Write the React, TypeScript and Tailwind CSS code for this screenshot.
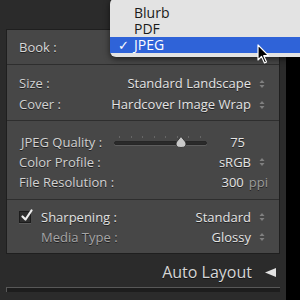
import React from "react";

const shadow = "[text-shadow:0_1px_0_rgba(0,0,0,0.55)]";

function Stepper() {
  return (
    <svg width="6" height="10" viewBox="0 0 6 10" className="ml-[8px] flex-none">
      <path d="M0.5 4 L3 1 L5.5 4 Z" fill="#808080" />
      <path d="M0.5 6 L3 9 L5.5 6 Z" fill="#808080" />
    </svg>
  );
}

function Row({
  label,
  value,
  labelClass = "text-[#d2d2d2]",
}: {
  label: React.ReactNode;
  value: string;
  labelClass?: string;
}) {
  return (
    <div className="flex items-center justify-between h-[21px]">
      <span className={`${labelClass} ${shadow}`}>{label}</span>
      <div className="flex items-center">
        <span className={`text-[#e4e4e4] ${shadow}`}>{value}</span>
        <Stepper />
      </div>
    </div>
  );
}

export default function App() {
  const ticks = [0, 1, 2, 3, 4, 5, 6, 7];
  return (
    <div className="relative w-[300px] h-[300px] bg-[#2b2b2b] flex overflow-hidden font-['Open_Sans',sans-serif] text-[13px] leading-none">
      <div className="w-[286px] flex flex-col pl-[6px] pr-[6px] pt-[29px]">
        <div className="border border-[#1f1f1f] bg-[#474747]">
          {/* Book */}
          <div className="h-[34px] flex items-center pl-[12px] pr-[14px]">
            <span className={`text-[#d8d8d8] ${shadow}`}>Book :</span>
          </div>
          {/* Size / Cover */}
          <div className="border-t border-[#2e2e2e] pl-[12px] pr-[14px] pt-[8px] pb-[5px]">
            <Row label="Size :" value="Standard Landscape" />
            <Row label="Cover :" value="Hardcover Image Wrap" />
          </div>
          {/* JPEG */}
          <div className="border-t border-[#2e2e2e] pl-[12px] pr-[14px] pt-[11px] pb-[7px]">
            <div className="flex items-center h-[20px]">
              <span className={`w-[95px] flex-none pl-[2px] text-[#d2d2d2] ${shadow}`}>JPEG Quality :</span>
              <div className="relative w-[93px] h-[20px] flex-none">
                <div className="absolute left-0 right-0 top-[9px] h-[4px] rounded-full bg-[#2a2a2a] border border-[#262626] shadow-[0_1px_0_rgba(255,255,255,0.12)]" />
                {ticks.map((t) => (
                  <div
                    key={t}
                    className="absolute top-[4px] w-[1px] h-[2px] bg-[#666]"
                    style={{ left: 5 + t * 11.5 }}
                  />
                ))}
                <svg className="absolute left-[61px] top-[4px]" width="12" height="12" viewBox="0 0 12 12">
                  <path d="M6 0.5 L10.5 6 Q11.5 8 10.5 10 Q9.5 11.5 6 11.5 Q2.5 11.5 1.5 10 Q0.5 8 1.5 6 Z" fill="#c9c9c9" stroke="#2a2a2a" strokeWidth="0.8" />
                </svg>
              </div>
              <div className="flex-1 flex justify-end">
                <span className={`mr-[20px] text-[#e4e4e4] ${shadow}`}>75</span>
              </div>
            </div>
            <div className="flex items-center justify-between h-[20px]">
              <span className={`text-[#d2d2d2] ${shadow}`}>Color Profile :</span>
              <div className="flex items-center">
                <span className={`text-[#e4e4e4] ${shadow}`}>sRGB</span>
                <Stepper />
              </div>
            </div>
            <div className="flex items-center justify-between h-[20px]">
              <span className={`text-[#d2d2d2] ${shadow}`}>File Resolution :</span>
              <div className="flex items-center mr-[-3px]">
                <span className={`text-[#e4e4e4] ${shadow}`}>300</span>
                <span className={`ml-[5px] text-[#9c9c9c] ${shadow}`}>ppi</span>
              </div>
            </div>
          </div>
          {/* Sharpening */}
          <div className="border-t border-[#2e2e2e] pl-[12px] pr-[14px] pt-[7px] pb-[6px]">
            <div className="flex items-center justify-between h-[20px]">
              <div className="flex items-center">
                <div className="relative w-[12px] h-[12px] bg-[#2e2e2e] border border-[#1c1c1c] shadow-[0_1px_0_rgba(255,255,255,0.1)]">
                  <svg className="absolute left-[1px] top-[-3px]" width="12" height="13" viewBox="0 0 12 13">
                    <path d="M1.5 7.5 L4.5 10.5 L10.5 1.5" fill="none" stroke="#ececec" strokeWidth="2.2" strokeLinecap="round" strokeLinejoin="round" />
                  </svg>
                </div>
                <span className={`ml-[10px] text-[#e0e0e0] ${shadow}`}>Sharpening :</span>
              </div>
              <div className="flex items-center">
                <span className={`text-[#e4e4e4] ${shadow}`}>Standard</span>
                <Stepper />
              </div>
            </div>
            <div className="flex items-center justify-between h-[20px]">
              <span className={`ml-[22px] text-[#a6a6a6] ${shadow}`}>Media Type :</span>
              <div className="flex items-center">
                <span className={`text-[#e4e4e4] ${shadow}`}>Glossy</span>
                <Stepper />
              </div>
            </div>
          </div>
        </div>
        {/* Auto Layout */}
        <div className="mt-[8px] h-[20px] flex items-center justify-end pr-[4px]">
          <span className={`text-[16px] text-[#d6d6d6] ${shadow}`}>Auto Layout</span>
          <svg className="ml-[13px]" width="11" height="9" viewBox="0 0 11 9">
            <path d="M0 4.5 L11 0 L11 9 Z" fill="#e2e2e2" />
          </svg>
        </div>
        <div className="mt-[5px] h-[5px] border-t border-l border-[#585858] bg-[#1d1d1d]" />
      </div>
      <div className="flex-1 bg-black" />

      {/* Popup menu */}
      <div className="absolute left-[110px] top-[-2px] w-[200px] h-[59px] rounded-l-[6px] bg-[#e3e3e3] shadow-[0_2px_6px_rgba(0,0,0,0.6)] pt-[7px] font-['Open_Sans',sans-serif] text-[14px] leading-none text-[#1a1a1a]">
        <div className="h-[16px] flex items-center pl-[24px]">Blurb</div>
        <div className="h-[16px] flex items-center pl-[24px]">PDF</div>
        <div className="h-[16px] flex items-center bg-[#2f63d8] text-white">
          <span className="w-[24px] pl-[8px] text-[13px]">✓</span>
          <span>JPEG</span>
        </div>
      </div>

      {/* Cursor */}
      <svg className="absolute left-[257px] top-[44px]" width="14" height="21" viewBox="0 0 14 21">
        <path d="M1 1 L1 16 L4.5 12.5 L7.5 19 L9.5 18 L6.7 11.7 L11.5 11.7 Z" fill="#000" stroke="#fff" strokeWidth="1.2" strokeLinejoin="round" />
      </svg>
    </div>
  );
}
